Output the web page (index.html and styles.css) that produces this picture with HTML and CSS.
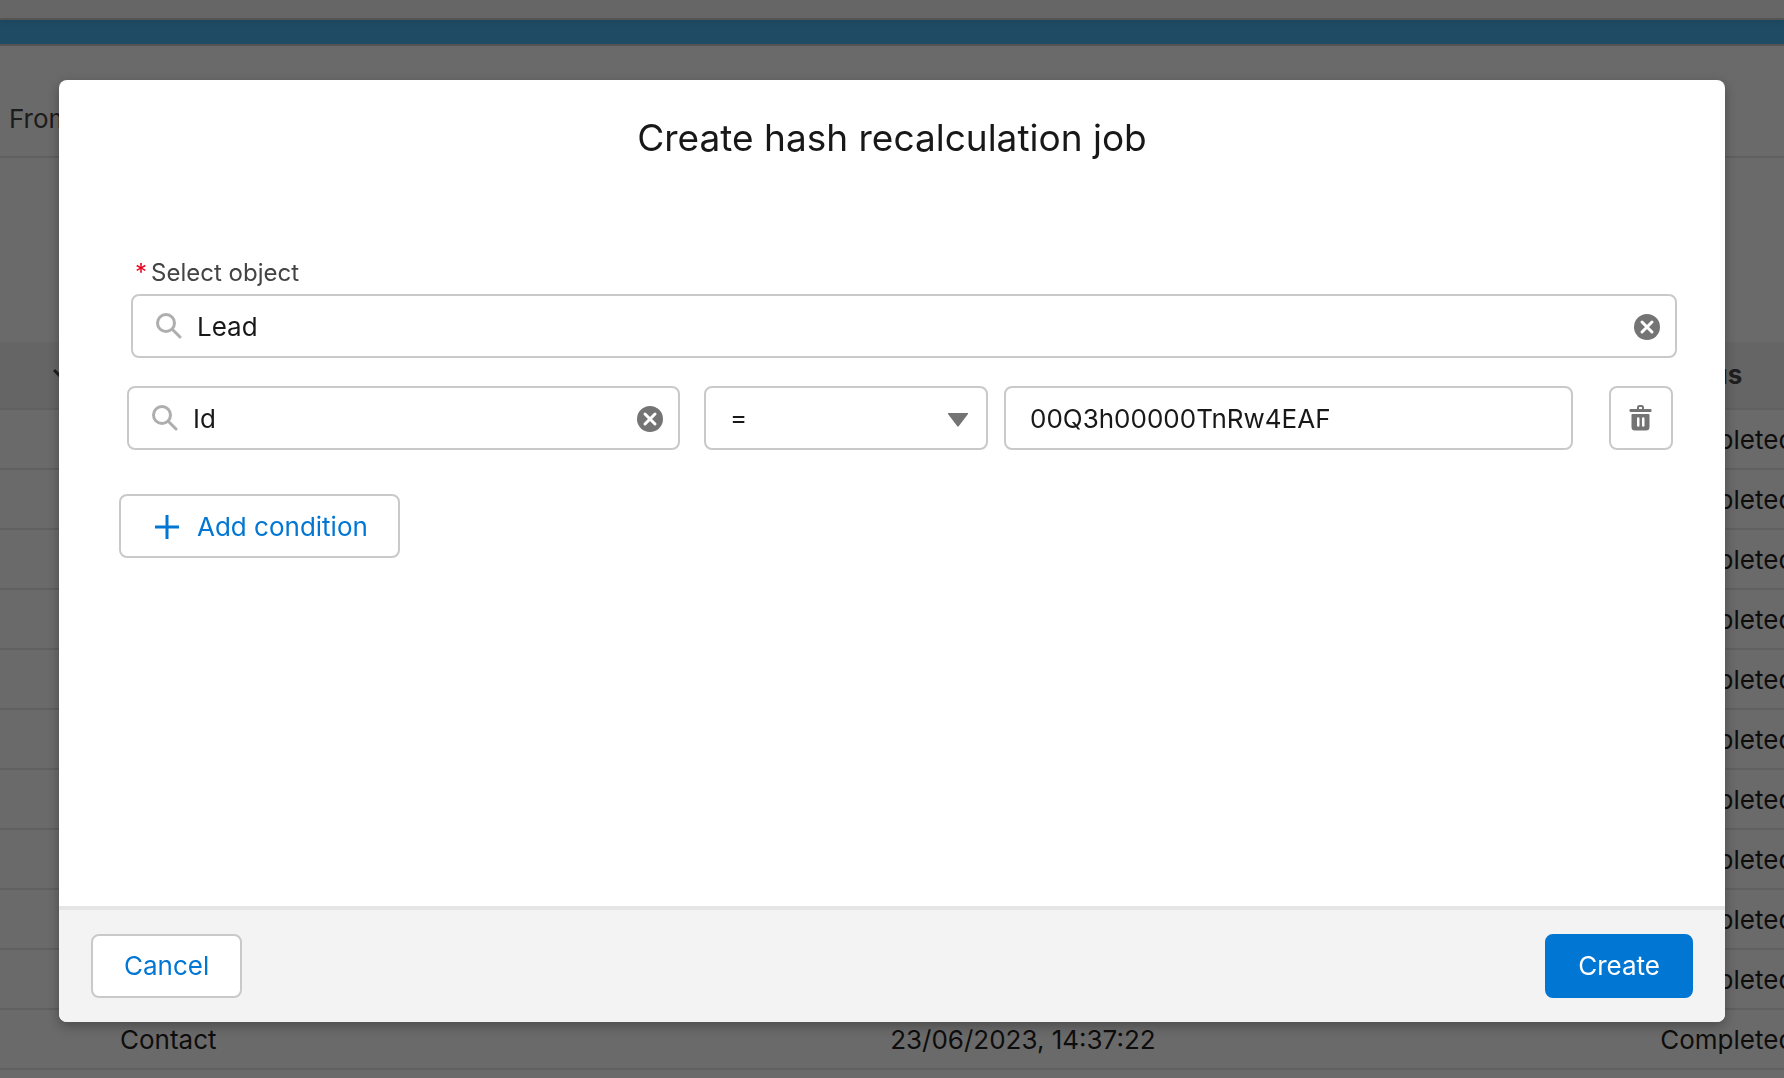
FILE: index.html
```
<!DOCTYPE html>
<html lang="en">
<head>
    <meta charset="UTF-8">
    <meta name="viewport" content="width=device-width, initial-scale=1.0">
    <title>Create hash recalculation job</title>
    <link rel="stylesheet" href="styles.css">
</head>
<body>

    <!-- Page behind the dialog -->
    <div class="page">
        <div class="nav-bar"></div>
        <div class="brand-band"></div>
        <div class="filters">From</div>
        <table class="jobs">
            <colgroup>
                <col class="col-number">
                <col>
                <col>
                <col>
            </colgroup>
            <thead>
                <tr>
                    <th>
                        <svg class="sort-icon" viewBox="0 0 16 10"><path d="M2 2l6 6 6-6"/></svg>
                    </th>
                    <th></th>
                    <th></th>
                    <th>Status</th>
                </tr>
            </thead>
            <tbody>
                <tr><td></td><td></td><td></td><td>Completed</td></tr>
                <tr><td></td><td></td><td></td><td>Completed</td></tr>
                <tr><td></td><td></td><td></td><td>Completed</td></tr>
                <tr><td></td><td></td><td></td><td>Completed</td></tr>
                <tr><td></td><td></td><td></td><td>Completed</td></tr>
                <tr><td></td><td></td><td></td><td>Completed</td></tr>
                <tr><td></td><td></td><td></td><td>Completed</td></tr>
                <tr><td></td><td></td><td></td><td>Completed</td></tr>
                <tr><td></td><td></td><td></td><td>Completed</td></tr>
                <tr><td></td><td></td><td></td><td>Completed</td></tr>
                <tr><td></td><td>Contact</td><td>23/06/2023, 14:37:22</td><td>Completed</td></tr>
            </tbody>
        </table>
    </div>

    <!-- Dialog -->
    <div class="backdrop">
        <form class="modal" role="dialog" aria-labelledby="modal-title">
            <h1 id="modal-title">Create hash recalculation job</h1>

            <div class="modal-body">
                <div class="object-field">
                    <label for="object"><span class="required">*</span>Select object</label>
                    <div class="lookup">
                        <svg class="search-icon" viewBox="0 0 26 26"><circle cx="10" cy="10" r="8.5"/><path d="M16.5 16.5l7.5 7.5"/></svg>
                        <input type="text" id="object" value="Lead">
                        <button type="button" class="clear" aria-label="Clear object">
                            <svg viewBox="0 0 26 26"><circle cx="13" cy="13" r="13"/><path d="M8 8l10 10M18 8L8 18"/></svg>
                        </button>
                    </div>
                </div>

                <div class="condition">
                    <div class="lookup">
                        <svg class="search-icon" viewBox="0 0 26 26"><circle cx="10" cy="10" r="8.5"/><path d="M16.5 16.5l7.5 7.5"/></svg>
                        <input type="text" value="Id" aria-label="Field">
                        <button type="button" class="clear" aria-label="Clear field">
                            <svg viewBox="0 0 26 26"><circle cx="13" cy="13" r="13"/><path d="M8 8l10 10M18 8L8 18"/></svg>
                        </button>
                    </div>
                    <div class="operator">
                        <select aria-label="Operator">
                            <option>=</option>
                        </select>
                        <svg class="arrow" viewBox="0 0 20 14"><path d="M0 0h20v1L10.500 13.500h-1L0 1z"/></svg>
                    </div>
                    <input type="text" value="00Q3h00000TnRw4EAF" aria-label="Value">
                    <button type="button" class="delete" aria-label="Delete condition">
                        <svg viewBox="0 0 24 28">
                            <path class="handle" d="M9 5V3.500Q9 2 10.500 2h2Q14 2 14 3.500V5"/>
                            <path d="M1.500 5h20q1 0 1 1v1q0 1-1 1h-20q-1 0-1-1V6q0-1 1-1z"/>
                            <path fill-rule="evenodd" d="M3.500 10h16q1 0 1 1v12q0 3.500-3.500 3.500H6Q2.500 26.500 2.500 23V11q0-1 1-1zM8 14.500v7q0 1.300 1.250 1.300t1.250-1.300v-7q0-1.300-1.250-1.300T8 14.500zM13 14.500v7q0 1.300 1.250 1.300t1.250-1.300v-7q0-1.300-1.250-1.300T13 14.500z"/>
                        </svg>
                    </button>
                </div>

                <button type="button" class="btn add">
                    <svg viewBox="0 0 24 24"><path d="M12 0v24M0 12h24"/></svg>
                    Add condition
                </button>
            </div>

            <div class="modal-footer">
                <button type="button" class="btn">Cancel</button>
                <button type="submit" class="btn primary">Create</button>
            </div>
        </form>
    </div>

</body>
</html>
```
FILE: styles.css
```
* {
    box-sizing: border-box;
}

body {
    margin: 0;
    font-family: Inter, "Liberation Sans", sans-serif;
    font-size: 26px;
    line-height: 32px;
    color: #181818;
    background-color: #ffffff;
}

/* --- Page behind the dialog --- */
.page {
    height: 100vh;
    overflow: hidden;
}

.nav-bar {
    position: relative;
    height: 20px;
    background-color: #f6f6f6;
    border-bottom: 2px solid #c9c9c9;
    box-shadow: 0 2px 6px rgba(0, 0, 0, 0.1);
}

.brand-band {
    height: 26px;
    background-color: #42b2f0;
    border-bottom: 2px solid #c9c9c9;
}

.filters {
    height: 112px;
    padding: 57px 9px 0;
    color: #3e3e3c;
    border-bottom: 2px solid #e5e5e5;
}

.jobs {
    width: calc(135% + 6px);
    margin-top: 184px;
    table-layout: fixed;
    border-collapse: separate;
    border-spacing: 0;
}

.col-number {
    width: 104px;
}

.jobs th,
.jobs td {
    height: 60px;
    padding: 2px 16px 0;
    text-align: left;
    border-bottom: 2px solid #e5e5e5;
}

.jobs th {
    height: 68px;
    padding: 0 16px;
    color: #444444;
    background-color: #f3f3f3;
}

.sort-icon {
    display: block;
    width: 16px;
    height: 10px;
    margin: 0 0 4px 36px;
    fill: none;
    stroke: #444444;
    stroke-width: 3;
}

/* --- Dialog --- */
.backdrop {
    position: fixed;
    inset: 0;
    display: flex;
    padding: 80px 59px 56px;
    background-color: rgba(8, 7, 7, 0.6);
}

.modal {
    flex: 1;
    display: flex;
    flex-direction: column;
    border-radius: 8px;
    background-color: #ffffff;
    box-shadow: 0 4px 12px rgba(0, 0, 0, 0.3);
}

h1 {
    margin: 0;
    padding: 32px 32px 72px;
    font-size: 37px;
    font-weight: 400;
    line-height: 52px;
    text-align: center;
}

.modal-body {
    flex: 1;
    padding: 21px 48px 0 60px;
}

label {
    display: block;
    padding-left: 4px;
    margin-bottom: 5px;
    font-size: 24px;
    color: #444444;
}

.required {
    margin-right: 4px;
    color: #ea001e;
}

.object-field {
    padding-left: 12px;
}

.lookup,
.operator {
    position: relative;
}

input,
select {
    display: block;
    width: 100%;
    height: 64px;
    padding: 0 24px;
    border: 2px solid #c9c9c9;
    border-radius: 8px;
    font: inherit;
    color: #181818;
    background-color: #ffffff;
    appearance: none;
}

.lookup input {
    padding: 0 64px;
}

.search-icon {
    position: absolute;
    left: 25px;
    top: 19px;
    width: 26px;
    height: 26px;
    fill: none;
    stroke: #aeaeae;
    stroke-width: 3;
    stroke-linecap: round;
}

/* Icons that sit inside the right end of a field */
.clear {
    position: absolute;
    right: 17px;
    top: 20px;
    width: 26px;
    height: 26px;
    padding: 0;
    border: 0;
    background: none;
    cursor: pointer;
}

.clear svg {
    display: block;
    fill: #747474;
}

.clear path {
    stroke: #ffffff;
    stroke-width: 3;
    stroke-linecap: round;
}

.arrow {
    position: absolute;
    right: 20px;
    top: 27px;
    width: 20px;
    height: 14px;
    fill: #747474;
    pointer-events: none;
}

.condition {
    display: grid;
    grid-template-columns: 561fr 284fr 569fr 84px;
    gap: 16px;
    margin: 28px 4px 0 8px;
}

.condition .lookup {
    margin-right: 8px;
}

.delete {
    width: 64px;
    height: 64px;
    padding: 0;
    margin-left: auto;
    border: 2px solid #c9c9c9;
    border-radius: 8px;
    background-color: #ffffff;
    cursor: pointer;
}

.delete svg {
    display: block;
    width: 24px;
    height: 28px;
    margin: 0 auto;
    fill: #747474;
}

.delete .handle {
    fill: none;
    stroke: #747474;
    stroke-width: 2;
}

.btn {
    height: 64px;
    padding: 0 31px;
    border: 2px solid #c9c9c9;
    border-radius: 8px;
    font: inherit;
    color: #0176d3;
    background-color: #ffffff;
    cursor: pointer;
}

.btn.add {
    display: flex;
    align-items: center;
    gap: 18px;
    padding: 2px 30px 0 34px;
    margin-top: 44px;
}

.btn.add svg {
    width: 24px;
    height: 24px;
    stroke: #0176d3;
    stroke-width: 3;
}

.btn.primary {
    color: #ffffff;
    background-color: #0176d3;
    border-color: #0176d3;
}

.modal-footer {
    display: flex;
    justify-content: space-between;
    padding: 24px 32px;
    border-top: 4px solid #e5e5e5;
    border-radius: 0 0 8px 8px;
    background-color: #f3f3f3;
}
```
